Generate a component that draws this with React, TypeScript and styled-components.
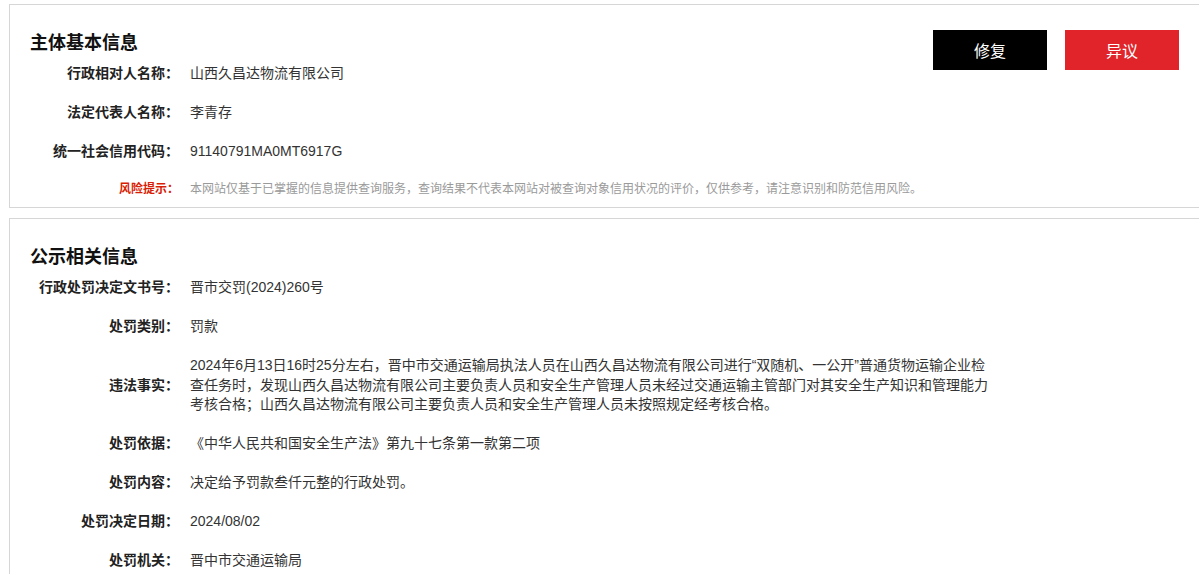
import styled, { createGlobalStyle } from 'styled-components';

const GlobalStyle = createGlobalStyle`
  html, body {
    margin: 0;
    padding: 0;
    background: #fff;
    overflow: hidden;
  }
  body {
    font-family: "Liberation Sans", "Noto Sans CJK SC", sans-serif;
    color: #333;
  }
`;

const Page = styled.div`
  padding: 4px 0 0 9px;
  display: flex;
  flex-direction: column;
  gap: 10px;
`;

// right border sits just past the viewport edge, as in the original capture
const Card = styled.section`
  box-sizing: border-box;
  width: 1191px;
  border: 1px solid #d6d6d6;
  display: flex;
  align-items: flex-start;
  background: #fff;
`;

const Body = styled.div`
  flex: 1;
  min-width: 0;
  padding-top: 26.5px;
`;

const Title = styled.h2`
  margin: 0;
  padding-left: 20px;
  font-size: 18px;
  line-height: 23px;
  font-weight: bold;
  color: #111;
`;

const Row = styled.div<{ $small?: boolean }>`
  display: flex;
  align-items: center;
  padding: 9.75px 0;
  line-height: ${p => (p.$small ? '16px' : '19.5px')};
`;

const Label = styled.div<{ $warn?: boolean; $small?: boolean }>`
  width: 169px;
  flex-shrink: 0;
  text-align: right;
  font-weight: bold;
  font-size: ${p => (p.$small ? '12px' : '14px')};
  color: ${p => (p.$warn ? '#d81e06' : '#222')};
`;

const Value = styled.div<{ $muted?: boolean }>`
  margin-left: 11px;
  width: 802px;
  flex-shrink: 0;
  font-size: ${p => (p.$muted ? '12px' : '14px')};
  color: ${p => (p.$muted ? '#9a9a9a' : '#333')};
`;

const Actions = styled.div`
  display: flex;
  flex-shrink: 0;
  gap: 18px;
  padding: 25px 20px 0 0;
`;

const Button = styled.button<{ $tone: 'dark' | 'red' }>`
  width: 114px;
  height: 40px;
  border: none;
  font-family: inherit;
  font-size: 16px;
  color: #fff;
  cursor: pointer;
  background: ${p => (p.$tone === 'dark' ? '#000' : '#e0242a')};
`;

type Item = { label: string; value: string };

const basics: Item[] = [
  { label: '行政相对人名称：', value: '山西久昌达物流有限公司' },
  { label: '法定代表人名称：', value: '李青存' },
  { label: '统一社会信用代码：', value: '91140791MA0MT6917G' },
];

const publicity: Item[] = [
  { label: '行政处罚决定文书号：', value: '晋市交罚(2024)260号' },
  { label: '处罚类别：', value: '罚款' },
  {
    label: '违法事实：',
    value:
      '2024年6月13日16时25分左右，晋中市交通运输局执法人员在山西久昌达物流有限公司进行“双随机、一公开”普通货物运输企业检查任务时，发现山西久昌达物流有限公司主要负责人员和安全生产管理人员未经过交通运输主管部门对其安全生产知识和管理能力考核合格；山西久昌达物流有限公司主要负责人员和安全生产管理人员未按照规定经考核合格。',
  },
  { label: '处罚依据：', value: '《中华人民共和国安全生产法》第九十七条第一款第二项' },
  { label: '处罚内容：', value: '决定给予罚款叁仟元整的行政处罚。' },
  { label: '处罚决定日期：', value: '2024/08/02' },
  { label: '处罚机关：', value: '晋中市交通运输局' },
];

const App = () => (
  <>
    <GlobalStyle />
    <Page>
      <Card>
        <Body>
          <Title>主体基本信息</Title>
          {basics.map(item => (
            <Row key={item.label}>
              <Label>{item.label}</Label>
              <Value>{item.value}</Value>
            </Row>
          ))}
          <Row $small>
            <Label $warn $small>风险提示：</Label>
            <Value $muted>
              本网站仅基于已掌握的信息提供查询服务，查询结果不代表本网站对被查询对象信用状况的评价，仅供参考，请注意识别和防范信用风险。
            </Value>
          </Row>
        </Body>
        <Actions>
          <Button $tone='dark'>修复</Button>
          <Button $tone='red'>异议</Button>
        </Actions>
      </Card>
      <Card>
        <Body>
          <Title>公示相关信息</Title>
          {publicity.map(item => (
            <Row key={item.label}>
              <Label>{item.label}</Label>
              <Value>{item.value}</Value>
            </Row>
          ))}
        </Body>
      </Card>
    </Page>
  </>
);

export default App;
